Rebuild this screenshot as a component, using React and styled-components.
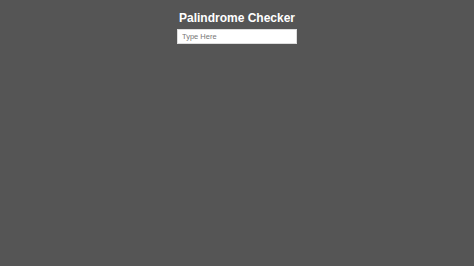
import styled, { createGlobalStyle } from "styled-components";

const Global = createGlobalStyle`
  body {
    margin: 0;
    background: #555555;
    font-family: "Liberation Sans", Arial, sans-serif;
  }
`;

const Page = styled.main`
  min-height: 266px;
  display: flex;
  flex-direction: column;
  align-items: center;
  padding-top: 11px;
  box-sizing: border-box;
`;

const Title = styled.h1`
  margin: 0 0 3px;
  color: #ffffff;
  font-size: 12px;
  font-weight: bold;
  line-height: 15px;
`;

const Input = styled.input`
  width: 120px;
  height: 15px;
  box-sizing: border-box;
  border: 1px solid #dddddd;
  background: #ffffff;
  padding: 0 4px;
  font-family: "Liberation Sans", Arial, sans-serif;
  font-size: 7.5px;
  outline: none;

  &::placeholder {
    color: #777777;
  }
`;

export default function App() {
  return (
    <>
      <Global />
      <Page>
        <Title>Palindrome Checker</Title>
        <Input type="text" placeholder="Type Here" />
      </Page>
    </>
  );
}
